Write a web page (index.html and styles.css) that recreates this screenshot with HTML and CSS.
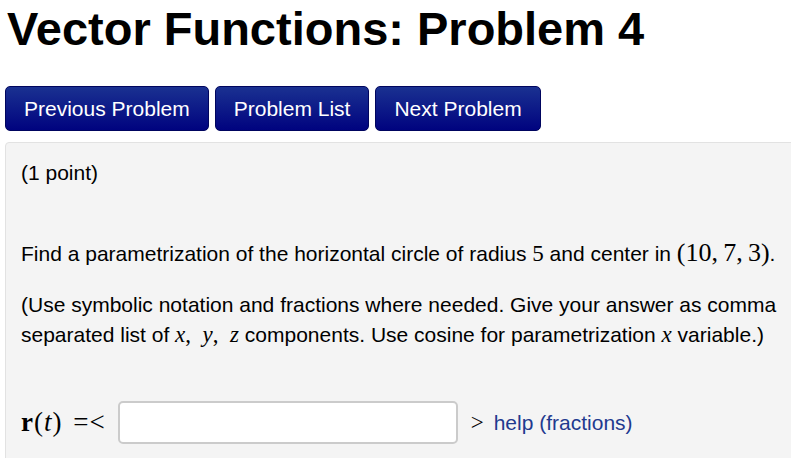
FILE: index.html
```html
<!DOCTYPE html>
<html lang="en">
<head>
    <meta charset="UTF-8">
    <meta name="viewport" content="width=device-width, initial-scale=1.0">
    <title>Vector Functions: Problem 4</title>
    <link rel="stylesheet" href="styles.css">
</head>
<body>
    <!-- Title -->
    <h1 class="title">Vector Functions: Problem 4</h1>

    <!-- Navigation -->
    <div class="nav">
        <button class="nav-button">Previous Problem</button>
        <button class="nav-button">Problem List</button>
        <button class="nav-button">Next Problem</button>
    </div>

    <!-- Problem body -->
    <div class="problem">
        <p class="points">(1 point)</p>
        <p class="statement">Find a parametrization of the horizontal circle of radius <span class="math">5</span> and center in <span class="math big">(10,&thinsp;7,&thinsp;3)</span>.</p>
        <p class="hint">(Use symbolic notation and fractions where needed. Give your answer as comma separated list of <span class="math"><i>x</i>,&nbsp; <i>y</i>,&nbsp; <i>z</i></span> components. Use cosine for parametrization <span class="math"><i>x</i></span> variable.)</p>
        <div class="answer">
            <span class="math label"><b>r</b>(<i>t</i>) =&lt;</span>
            <input type="text" class="answer-box">
            <span class="math">&gt;</span>
            <a href="#" class="help-link">help (fractions)</a>
        </div>
    </div>
</body>
</html>
```

FILE: styles.css
```css
body {
    font-family: 'Liberation Sans', Arial, sans-serif;
    background-color: #fff;
    color: #000;
    margin: 0;
    padding: 0 5px;
    overflow: hidden;
}
.title {
    font-size: 47px;
    font-weight: bold;
    margin: 3px 0 0 2px;
    line-height: 52px;
}
.nav {
    display: flex;
    gap: 6px;
    margin-top: 31px;
}
.nav-button {
    font-family: 'Liberation Sans', Arial, sans-serif;
    font-size: 21px;
    color: #fff;
    background: linear-gradient(#1a3191, #00037f);
    border: 1px solid #00055e;
    border-radius: 5px;
    height: 45px;
    padding: 0 18px;
    cursor: pointer;
}
.problem {
    width: 800px;
    margin-top: 11px;
    padding: 15px 15px 20px;
    background-color: #f4f4f4;
    border: 1px solid #e2e2e2;
    border-radius: 4px;
    font-size: 21px;
    line-height: 30px;
}
.problem p {
    margin: 0;
}
.statement {
    margin-top: 51px !important;
}
.hint {
    margin-top: 21px !important;
}
.math {
    font-family: 'Liberation Serif', 'DejaVu Serif', serif;
    font-size: 23px;
    line-height: 1;
}
.math.big {
    font-size: 26px;
}
.answer {
    display: flex;
    align-items: center;
    margin-top: 51px;
}
.answer .label {
    font-size: 27px;
    letter-spacing: 1px;
    word-spacing: 3px;
    margin-right: 12px;
}
.answer-box {
    width: 340px;
    height: 43px;
    box-sizing: border-box;
    border: 2px solid #cbcbcb;
    border-radius: 5px;
    background-color: #fff;
    margin-right: 13px;
}
.help-link {
    color: #1f3a8f;
    text-decoration: none;
    margin-left: 10px;
}
```
